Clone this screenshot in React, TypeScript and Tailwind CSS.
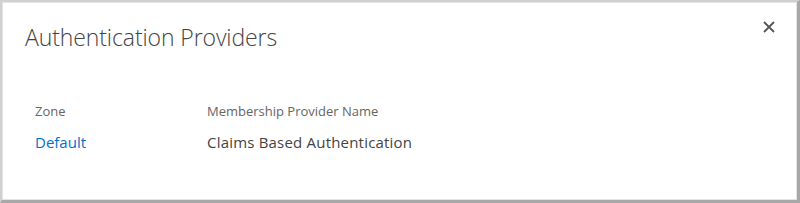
export default function App() {
  return (
    <div className="h-[203px] w-[800px] bg-white" style={{ fontFamily: '"Open Sans", "Noto Sans", sans-serif' }}>
      <div className="relative h-full w-full border-t-2 border-l-2 border-r-[3px] border-b-[3px] border-t-[#d0d0d0] border-l-[#d0d0d0] border-r-[#a8a8a8] border-b-[#a8a8a8]">
        <div className="h-full w-full border border-[#e4e4e4] pl-[22px] pt-[17px]">
          <h1 className="text-[23px] font-light leading-[34px] text-[#444444] tracking-[-0.1px]">
            Authentication Providers
          </h1>
          <button className="absolute right-[20px] top-[17px] flex h-[16px] w-[16px] items-center justify-center text-[#555555]">
            <svg width="12" height="12" viewBox="0 0 12 12" fill="none" stroke="currentColor" strokeWidth="1.8">
              <path d="M1 1l10 10M11 1L1 11" />
            </svg>
          </button>
          <table className="mt-[46px] ml-[10px] border-collapse">
            <thead>
              <tr className="text-left text-[13px] text-[#666666]">
                <th className="w-[172px] p-0 font-normal leading-[22px]">Zone</th>
                <th className="p-0 font-normal leading-[22px]">Membership Provider Name</th>
              </tr>
            </thead>
            <tbody>
              <tr className="text-[15px]">
                <td className="p-0 pt-[9px] leading-[22px] text-[#0072c6]">Default</td>
                <td className="p-0 pt-[9px] leading-[22px] text-[#444444] tracking-[0.2px]">Claims Based Authentication</td>
              </tr>
            </tbody>
          </table>
        </div>
      </div>
    </div>
  )
}
